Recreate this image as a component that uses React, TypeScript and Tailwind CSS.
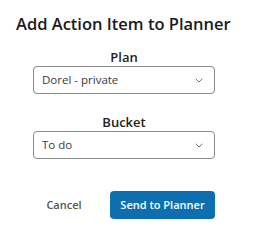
import React from "react";

function Chevron() {
  return (
    <svg width="8" height="5" viewBox="0 0 8 5" fill="none" className="text-[#777]">
      <path d="M1 1l3 3 3-3" stroke="currentColor" strokeWidth="1" strokeLinecap="round" strokeLinejoin="round" />
    </svg>
  );
}

function Field({ label, value }: { label: string; value: string }) {
  return (
    <div className="flex flex-col">
      <div className="text-center text-[13px] leading-[18px] font-semibold text-[#222]">{label}</div>
      <div className="h-[28px] rounded-[4px] border border-[#8a8a8a] flex items-center justify-between pl-[8px] pr-[11px]">
        <span className="text-[11.5px] text-[#3a3a3a]">{value}</span>
        <Chevron />
      </div>
    </div>
  );
}

export default function App() {
  return (
    <div className="w-[268px] h-[237px] bg-white" style={{ fontFamily: '"Open Sans", "Noto Sans", sans-serif' }}>
      <div className="pt-[12px] pl-[16px] text-[16.5px] leading-[24px] font-semibold text-[#1a1a1a]">
        Add Action Item to Planner
      </div>
      <div className="ml-[33px] w-[182px] mt-[12px] flex flex-col gap-[19px]">
        <Field label="Plan" value="Dorel - private" />
        <Field label="Bucket" value="To do" />
      </div>
      <div className="ml-[33px] mt-[32px] flex items-center gap-[15px]">
        <button className="w-[62px] h-[28px] text-[11px] font-semibold text-[#555]">Cancel</button>
        <button className="w-[105px] h-[28px] rounded-[4px] bg-[#0d6fb0] text-white text-[11px] font-semibold">
          Send to Planner
        </button>
      </div>
    </div>
  );
}
